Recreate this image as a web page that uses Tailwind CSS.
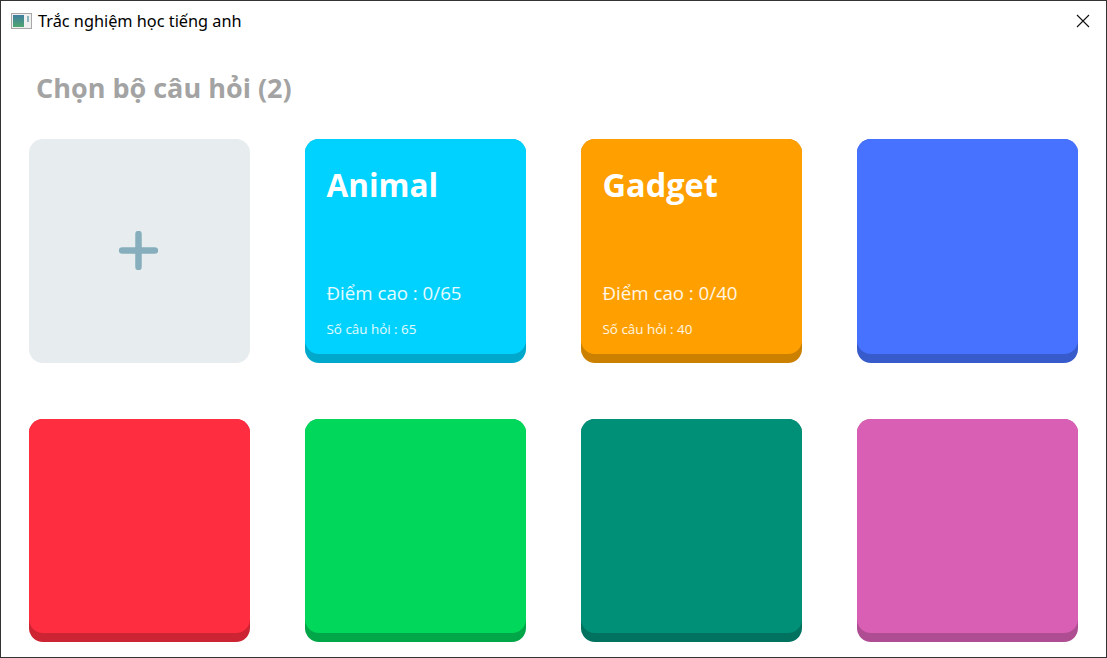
<!DOCTYPE html>
<html lang="vi">
<head>
  <meta charset="UTF-8">
  <title>Trắc nghiệm học tiếng anh</title>
  <script src="https://cdn.jsdelivr.net/npm/@tailwindcss/browser@4"></script>
</head>
<body class="bg-white overflow-hidden font-['Open_Sans','Noto_Sans',sans-serif]">
  <div class="w-[1107px] h-[658px] border border-[#333333] overflow-hidden">
    <!-- Title bar -->
    <div class="h-[40px] flex items-center pl-[10px] pr-[16px]">
      <svg width="21" height="16" viewBox="0 0 21 16" class="shrink-0">
        <rect x="0.5" y="0.5" width="20" height="15" fill="#f0f0f0" stroke="#a8a8a8"/>
        <defs><linearGradient id="g" x1="0" y1="0" x2="0" y2="1"><stop offset="0" stop-color="#3f7fa0"/><stop offset="1" stop-color="#4fa56f"/></linearGradient></defs>
        <rect x="2" y="2" width="11" height="12" fill="url(#g)"/>
        <rect x="16" y="3" width="2" height="6" fill="#8fb5bd"/>
      </svg>
      <span class="ml-[6px] text-[16.3px] text-black font-['Noto_Sans',sans-serif]">Trắc nghiệm học tiếng anh</span>
      <svg width="14" height="14" viewBox="0 0 14 14" class="ml-auto" fill="none" stroke="#111111" stroke-width="1.1">
        <path d="M1 1 13 13M13 1 1 13"/>
      </svg>
    </div>
    <!-- Heading -->
    <h1 class="mt-[27px] ml-[35px] h-[40px] text-[27px] leading-[40px] font-bold text-[#a3a3a3]">Chọn bộ câu hỏi (2)</h1>
    <!-- Cards -->
    <div class="mt-[31px] ml-[28px] grid grid-cols-[repeat(4,220.5px)] gap-x-[55.5px] gap-y-[56px]">
      <div class="h-[223.5px] rounded-[14px] bg-[#e7ecef] flex items-center justify-center">
        <svg width="39" height="39" viewBox="0 0 39 39" fill="none" stroke="#86aebc" stroke-width="6.5" stroke-linecap="round" class="mr-[1px]">
          <path d="M19.5 3V36M3 19.5H36"/>
        </svg>
      </div>
      <div class="h-[223.5px] rounded-[14px] bg-[#00a9cc]">
        <div class="h-[214.5px] rounded-[14px] bg-[#00d2ff] text-white px-[21.5px] flex flex-col">
          <div class="mt-[22px] text-[31.5px] leading-[48px] font-bold">Animal</div>
          <div class="mt-auto text-[18.7px] leading-[26px] text-white/90">Điểm cao : 0/65</div>
          <div class="mt-[14px] mb-[15.5px] text-[13.4px] leading-[18px] text-white/90">Số câu hỏi : 65</div>
        </div>
      </div>
      <div class="h-[223.5px] rounded-[14px] bg-[#cc8000]">
        <div class="h-[214.5px] rounded-[14px] bg-[#ffa000] text-white px-[21.5px] flex flex-col">
          <div class="mt-[22px] text-[32.5px] leading-[48px] font-bold">Gadget</div>
          <div class="mt-auto text-[18.7px] leading-[26px] text-white/90">Điểm cao : 0/40</div>
          <div class="mt-[14px] mb-[15.5px] text-[13.4px] leading-[18px] text-white/90">Số câu hỏi : 40</div>
        </div>
      </div>
      <div class="h-[223.5px] rounded-[14px] bg-[#385bcc]">
        <div class="h-[214.5px] rounded-[14px] bg-[#4672ff]"></div>
      </div>
      <div class="h-[223.5px] rounded-[14px] bg-[#cc2433]">
        <div class="h-[214.5px] rounded-[14px] bg-[#ff2d40]"></div>
      </div>
      <div class="h-[223.5px] rounded-[14px] bg-[#00a648]">
        <div class="h-[214.5px] rounded-[14px] bg-[#00d75b]"></div>
      </div>
      <div class="h-[223.5px] rounded-[14px] bg-[#00725f]">
        <div class="h-[214.5px] rounded-[14px] bg-[#009078]"></div>
      </div>
      <div class="h-[223.5px] rounded-[14px] bg-[#ae4d91]">
        <div class="h-[214.5px] rounded-[14px] bg-[#d95fb4]"></div>
      </div>
    </div>
  </div>
</body>
</html>
